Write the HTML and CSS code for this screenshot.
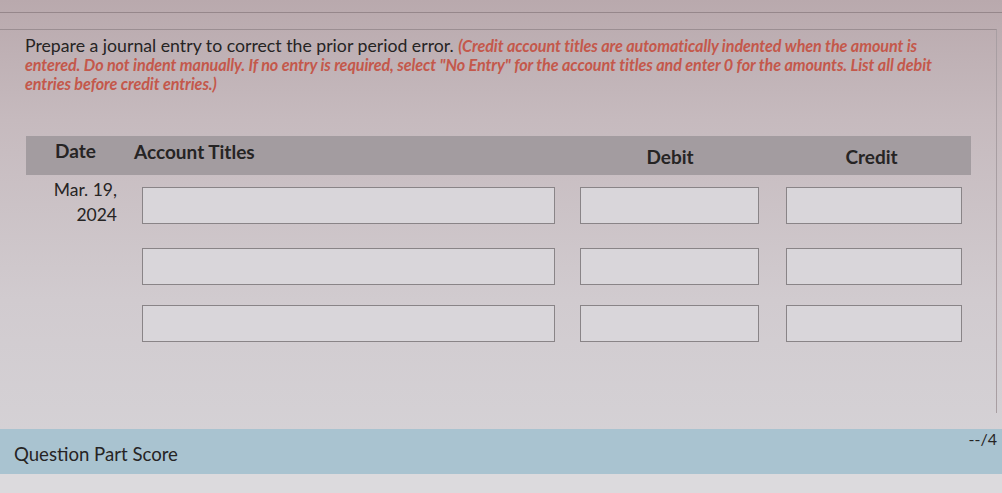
FILE: index.html
```html
<!DOCTYPE html>
<html lang="en">
<head>
  <meta charset="UTF-8">
  <meta name="viewport" content="width=device-width, initial-scale=1.0">
  <title>Journal Entry</title>
  <link rel="stylesheet" href="styles.css">
</head>
<body>
  <div class="top-strip"></div>
  <div class="panel">
    <p class="question">
      Prepare a journal entry to correct the prior period error.
      <span class="note">(Credit account titles are automatically indented when the amount is entered. Do not indent manually. If no entry is required, select "No Entry" for the account titles and enter 0 for the amounts. List all debit entries before credit entries.)</span>
    </p>

    <div class="journal">
      <div class="journal-head">
        <div class="col-date">Date</div>
        <div class="col-account">Account Titles</div>
        <div class="col-debit">Debit</div>
        <div class="col-credit">Credit</div>
      </div>

      <div class="journal-row first-row">
        <div class="col-date">Mar. 19,<br>2024</div>
        <div class="col-account"><input type="text" class="field field-account"></div>
        <div class="col-debit"><input type="text" class="field field-debit"></div>
        <div class="col-credit"><input type="text" class="field field-credit"></div>
      </div>
      <div class="journal-row">
        <div class="col-date"></div>
        <div class="col-account"><input type="text" class="field field-account"></div>
        <div class="col-debit"><input type="text" class="field field-debit"></div>
        <div class="col-credit"><input type="text" class="field field-credit"></div>
      </div>
      <div class="journal-row">
        <div class="col-date"></div>
        <div class="col-account"><input type="text" class="field field-account"></div>
        <div class="col-debit"><input type="text" class="field field-debit"></div>
        <div class="col-credit"><input type="text" class="field field-credit"></div>
      </div>
    </div>
  </div>

  <div class="score-bar">
    <div class="score-value">--/4</div>
    <div class="score-label">Question Part Score</div>
  </div>
  <div class="bottom-strip"></div>
</body>
</html>
```

FILE: styles.css
```css
body {
  font-family: Lato, "Open Sans", sans-serif;
  margin: 0;
  padding: 0;
  color: #262424;
  background: linear-gradient(180deg, #b9a9ad 0px, #c6babe 120px, #d1cbcf 300px, #d6d4d8 493px);
  height: 493px;
  overflow: hidden;
}

.top-strip {
  height: 12px;
  border-bottom: 1px solid #96878b;
}

.panel {
  margin-top: 16px;
  margin-right: 5px;
  height: 384px;
  border-top: 1px solid #9b8e92;
  border-right: 1px solid #a89ea2;
  padding: 6px 0 0 25px;
  box-sizing: border-box;
}

.question {
  margin: 0;
  width: 928px;
  font-size: 17.7px;
  line-height: 19px;
}

.note {
  color: #c4584b;
  font-size: 16.2px;
  font-weight: bold;
  font-style: italic;
  letter-spacing: -0.1px;
}

.journal {
  margin-top: 43px;
  width: 945px;
  margin-left: 1px;
}

.journal-head,
.journal-row {
  display: grid;
  grid-template-columns: 104px 438px 204px 199px;
}

.journal-head {
  background-color: #a39ca0;
  height: 39px;
  align-items: center;
  font-weight: bold;
  font-size: 19px;
}

.journal-head .col-date {
  padding-left: 29px;
  padding-bottom: 10px;
}

.journal-head .col-account {
  padding-left: 4px;
  padding-bottom: 9px;
}

.journal-head .col-debit,
.journal-head .col-credit {
  text-align: center;
  padding-top: 1px;
}

.journal-row {
  height: 57px;
  align-items: start;
}

.first-row {
  margin-top: 6px;
  height: 61px;
}

.journal-row .col-date {
  text-align: right;
  padding-right: 13px;
  font-size: 17.5px;
  line-height: 25px;
  margin-top: -4px;
}

.field {
  display: block;
  box-sizing: border-box;
  height: 37px;
  margin-top: 6px;
  border: 1px solid #898487;
  background-color: #d9d6da;
}

.field-account {
  width: 413px;
  margin-left: 12px;
}

.field-debit {
  width: 179px;
  margin-left: 12px;
}

.field-credit {
  width: 176px;
  margin-left: 14px;
}

.score-bar {
  margin-top: 16px;
  height: 45px;
  background-color: #a9c3d0;
  position: relative;
  box-sizing: border-box;
  padding: 14px 14px 0;
  font-size: 18.6px;
}

.score-value {
  position: absolute;
  right: 5px;
  top: 0;
  font-size: 16px;
}

.score-label {
  line-height: 22px;
}

.bottom-strip {
  height: 20px;
  background-color: #dcdadd;
}
```
